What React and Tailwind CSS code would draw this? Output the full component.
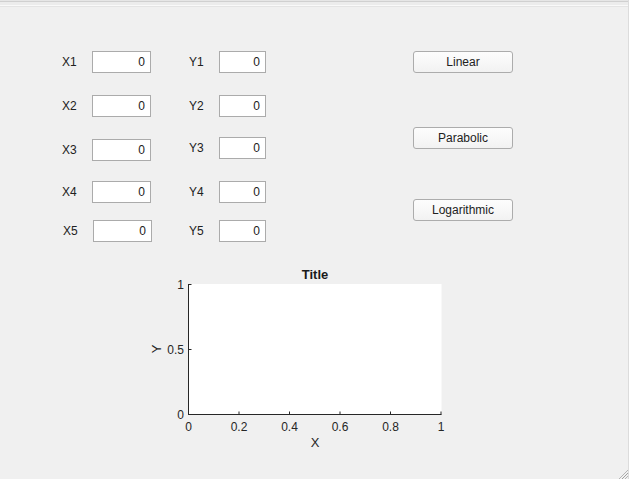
import React from "react";

function Field({ label, w, className = "" }) {
  return (
    <div className={`flex items-center h-[22px] ${className}`}>
      <div className="w-[30px] leading-none">{label}</div>
      <div
        className={`${w} h-[22px] bg-white border border-[#ababab] flex items-center justify-end pr-[5px] leading-none`}
      >
        0
      </div>
    </div>
  );
}

function Btn({ children, className = "" }) {
  return (
    <div
      className={`w-[100px] h-[22px] rounded-[3px] border border-[#acacac] bg-gradient-to-b from-[#fdfdfd] to-[#f2f2f2] flex items-center justify-center leading-none ${className}`}
    >
      {children}
    </div>
  );
}

function Chart() {
  const xs = [0, 0.2, 0.4, 0.6, 0.8, 1];
  const x0 = 48.5;
  const x1 = 301;
  const yTop = 22;
  const yBot = 152.5;
  const font = "'Liberation Sans', Arial, sans-serif";
  return (
    <svg width="320" height="195" viewBox="0 0 320 195" className="block">
      <rect x="48" y="22" width="253.5" height="130.5" fill="#ffffff" />
      <text x="175" y="16.5" textAnchor="middle" fontFamily={font} fontSize="13" fontWeight="bold" fill="#1a1a1a">
        Title
      </text>
      <line x1={x0} y1={yTop} x2={x0} y2={yBot} stroke="#262626" strokeWidth="1" />
      <line x1={48} y1={yBot} x2={x1 + 0.5} y2={yBot} stroke="#262626" strokeWidth="1" />
      <line x1={x0} y1={22.5} x2={51.5} y2={22.5} stroke="#262626" strokeWidth="1" />
      <line x1={x0} y1={87.5} x2={51.5} y2={87.5} stroke="#262626" strokeWidth="1" />
      <text x="44" y="27" textAnchor="end" fontFamily={font} fontSize="12" fill="#262626">1</text>
      <text x="44" y="91.5" textAnchor="end" fontFamily={font} fontSize="12" fill="#262626">0.5</text>
      <text x="44" y="156.5" textAnchor="end" fontFamily={font} fontSize="12" fill="#262626">0</text>
      {xs.map((v, i) => {
        const x = x0 + (i * (x1 - x0)) / 5;
        return (
          <g key={i}>
            <line x1={x} y1={yBot} x2={x} y2={yBot - 3} stroke="#262626" strokeWidth="1" />
            <text x={x} y="168.5" textAnchor="middle" fontFamily={font} fontSize="12" fill="#262626">
              {String(v)}
            </text>
          </g>
        );
      })}
      <text x="175" y="185" textAnchor="middle" fontFamily={font} fontSize="13" fill="#262626">X</text>
      <text
        x="16"
        y="87"
        textAnchor="middle"
        dominantBaseline="central"
        fontFamily={font}
        fontSize="13"
        fill="#262626"
        transform="rotate(-90 16 87)"
      >
        Y
      </text>
    </svg>
  );
}

function Grip() {
  return (
    <svg width="12" height="12" viewBox="0 0 12 12" className="absolute right-0 bottom-0">
      <line x1="3" y1="12" x2="12" y2="3" stroke="#b4b4b4" strokeWidth="1" />
      <line x1="6" y1="12" x2="12" y2="6" stroke="#a0a0a0" strokeWidth="1" />
      <line x1="9" y1="12" x2="12" y2="9" stroke="#b4b4b4" strokeWidth="1" />
    </svg>
  );
}

export default function App() {
  return (
    <div className="w-[629px] h-[479px] bg-[#f0f0f0] relative overflow-hidden border-r border-[#dcdcdc] font-['Liberation_Sans',Arial,sans-serif] text-[12px] text-[#212121]">
      <div className="h-[1px] bg-[#e6e6e6]" />
      <div className="h-[1px] bg-[#d0d0d0]" />
      <div className="h-[3px] bg-[#ececec]" />
      <div className="h-[1px] bg-[#f9f9f9]" />
      <div className="h-[1px] bg-[#e4e4e4]" />

      <div className="flex items-start mt-[44px]">
        <div className="flex flex-col ml-[62px]">
          <Field label="X1" w="w-[59px]" />
          <Field label="X2" w="w-[59px]" className="mt-[22px]" />
          <Field label="X3" w="w-[59px]" className="mt-[22px]" />
          <Field label="X4" w="w-[59px]" className="mt-[20px]" />
          <Field label="X5" w="w-[59px]" className="mt-[17px] ml-[1px]" />
        </div>
        <div className="flex flex-col ml-[37px]">
          <Field label="Y1" w="w-[47px]" />
          <Field label="Y2" w="w-[47px]" className="mt-[22px]" />
          <Field label="Y3" w="w-[47px]" className="mt-[20px]" />
          <Field label="Y4" w="w-[47px]" className="mt-[22px]" />
          <Field label="Y5" w="w-[47px]" className="mt-[17px]" />
        </div>
        <div className="flex flex-col ml-[147px]">
          <Btn>Linear</Btn>
          <Btn className="mt-[54px]">Parabolic</Btn>
          <Btn className="mt-[50px]">Logarithmic</Btn>
        </div>
      </div>

      <div className="ml-[140px] mt-[20px]">
        <Chart />
      </div>

      <Grip />
    </div>
  );
}
